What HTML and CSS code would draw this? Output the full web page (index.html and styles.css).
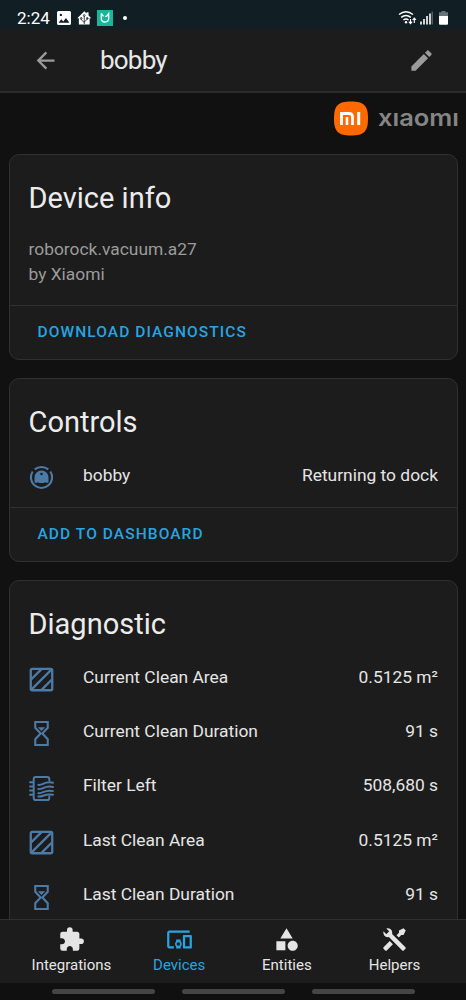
FILE: index.html
```html
<!DOCTYPE html>
<html lang="en">
<head>
<meta charset="utf-8">
<title>bobby</title>
<link rel="stylesheet" href="styles.css">
</head>
<body>
<svg class="defs" aria-hidden="true">
  <symbol id="area" viewBox="0 0 24 24"><g fill="none" stroke="currentColor" stroke-width="2.200"><rect x="1.700" y="1.700" width="20.600" height="20.600" rx="1.500"/><path d="M2 12L12 2M2.500 21.500L21.500 2.500M12 22L22 12"/></g></symbol>
  <symbol id="sand" viewBox="0 0 24 24"><path fill="none" stroke="currentColor" stroke-width="2" d="M6 1H18V6.500L12.800 12L18 17.500V23H6V17.500L11.200 12L6 6.500Z"/><path fill="currentColor" d="M8.500 6H15.500L12 9.500Z"/></symbol>
  <symbol id="filter" viewBox="0 0 24 24"><g fill="none" stroke="currentColor" stroke-width="1.900" stroke-linecap="round"><path d="M19.500 4V3Q19.500 1 17.500 1H6.500Q4.500 1 4.500 3V21Q4.500 23 6.500 23H17.500Q19.500 23 19.500 21V20M1 6H4M1 10H4M1 14H4M1 18H4M9 8.500C13 9.500 15 4.500 23 6.500M9 12.500C13 13.500 15 8.500 23 10.500M9 16.500C13 17.500 15 12.500 23 14.500M9 19.700C13 20.500 15 16.500 23 18"/></g></symbol>
</svg>

<div class="status">
  <span class="clock">2:24</span>
  <svg class="s-img" viewBox="3 3 18 18"><path d="M8.500,13.500L11,16.500L14.500,12L19,18H5M21,19V5C21,3.890 20.100,3 19,3H5A2,2 0 0,0 3,5V19A2,2 0 0,0 5,21H19A2,2 0 0,0 21,19Z" fill="#fff"/><circle cx="8" cy="8" r="1.500" fill="#111e23"/></svg>
  <svg class="s-home" viewBox="0 0 14 14"><path d="M7 .3L9.300 2.500V1.300H11.300V4.500L14 7.200H12.400V13.500H1.600V7.200H0Z" fill="#fff"/><g fill="none" stroke="#111e23" stroke-width=".8"><path d="M7 13V5M7 11.500L3.800 8.500V7.500M7 11L10.200 8V7"/><circle cx="7" cy="4.500" r=".9"/><circle cx="4" cy="7.400" r=".9"/><circle cx="10" cy="7.400" r=".9"/></g></svg>
  <svg class="s-mi" viewBox="0 0 16 16"><rect width="16" height="16" fill="#16b79b"/><path d="M4.300 3.500V8.200C4.300 10.700 5.700 12 8 12S11.700 10.700 11.700 8.200V3.500L9.500 6.300H8.200" fill="none" stroke="#fff" stroke-width="1.300"/><path d="M4.300 3.500L6.500 6.300" stroke="#fff" stroke-width="1.300"/></svg>
  <i class="dot"></i>
  <svg class="s-right" viewBox="0 0 52 16"><g fill="none" stroke="#fff" stroke-width="1.500"><path d="M1 4.500Q8 -1 15 4.500M3.200 7.300Q8 3.500 12.800 7.300M5.400 10Q8 8 10.500 10"/></g><circle cx="8" cy="12.300" r="1.200" fill="#fff"/><path d="M12.500 9V13M10.800 11.700L12.500 13.600L14.200 11.700M16.300 13V8.500M14.600 10L16.300 8L18 10" stroke="#fff" stroke-width="1.100" fill="none"/><path d="M23 14.500V11.500M26 14.500V9M29 14.500V6" stroke="#fff" stroke-width="1.600"/><path d="M32 14.500V3.500" stroke="#fff" stroke-width="1.600"/><path d="M34.200 14.500V1.500" stroke="#647076" stroke-width="1.200"/><path d="M43.500 1H47.500V2.300H50V7H41V2.300H43.500Z" fill="#69747a"/><path d="M41 6H50V13.500Q50 14.700 49 14.700H42Q41 14.700 41 13.500Z" fill="#fff"/></svg>
</div>

<header class="header">
  <svg class="icon back" viewBox="0 0 24 24"><path d="M20,11V13H8L13.500,18.500L12.080,19.920L4.160,12L12.080,4.080L13.500,5.500L8,11H20Z"/></svg>
  <h1>bobby</h1>
  <svg class="icon edit" viewBox="0 0 24 24"><path d="M20.710,7.040C21.100,6.650 21.100,6 20.710,5.630L18.370,3.290C18,2.900 17.350,2.900 16.960,3.290L15.120,5.120L18.870,8.870M3,17.250V21H6.750L17.810,9.930L14.060,6.180L3,17.250Z"/></svg>
</header>

<main class="content">
  <div class="brand">
    <svg class="mark" viewBox="0 0 34 34"><path d="M17 0C30 0 34 4 34 17S30 34 17 34S0 30 0 17S4 0 17 0Z" fill="#ff6900"/><path d="M7.500 23.500V12H15Q18.500 12 18.500 15.500V23.500" fill="none" stroke="#fff" stroke-width="2.800"/><path d="M11.700 15.500H14.300V23.500H11.700ZM23.200 10.600H26.200V23.500H23.200Z" fill="#fff"/></svg>
    <svg class="wordmark" viewBox="0 0 82 20" role="img" aria-label="xiaomi"><text transform="translate(0 16.500) scale(1 1.200)" textLength="81" lengthAdjust="spacingAndGlyphs">xıaomı</text></svg>
  </div>

  <section class="card">
    <h2>Device info</h2>
    <p class="model">roborock.vacuum.a27<br>by Xiaomi</p>
    <div class="action">DOWNLOAD DIAGNOSTICS</div>
  </section>

  <section class="card controls">
    <h2>Controls</h2>
    <div class="row"><svg viewBox="0 0 24 24"><g fill="none" stroke="currentColor" stroke-width="2"><path d="M3.500 6.200A10.200 10.200 0 1 0 20.500 6.200M5.500 4.200A10.200 10.200 0 0 1 18.500 4.200"/></g><path d="M5.300 16.500V12A6.700 6.700 0 0 1 18.700 12V16.500L17 17.300L15.500 16.500L14 17.300H10L8.500 16.500L7 17.300Z" fill="currentColor"/><circle cx="12" cy="8.700" r="1.200" fill="#1c1c1c"/></svg><span>bobby</span><b>Returning to dock</b></div>
    <div class="action">ADD TO DASHBOARD</div>
  </section>

  <section class="card last">
    <h2>Diagnostic</h2>
    <div class="row"><svg><use href="#area"/></svg><span>Current Clean Area</span><b>0.5125 m²</b></div>
    <div class="row"><svg><use href="#sand"/></svg><span>Current Clean Duration</span><b>91 s</b></div>
    <div class="row"><svg><use href="#filter"/></svg><span>Filter Left</span><b>508,680 s</b></div>
    <div class="row"><svg><use href="#area"/></svg><span>Last Clean Area</span><b>0.5125 m²</b></div>
    <div class="row"><svg><use href="#sand"/></svg><span>Last Clean Duration</span><b>91 s</b></div>
  </section>
</main>

<nav class="tabs">
  <div class="tab"><svg viewBox="0 0 24 24"><path d="M20.500,11H19V7C19,5.890 18.100,5 17,5H13V3.500A2.500,2.500 0 0,0 10.500,1A2.500,2.500 0 0,0 8,3.500V5H4A2,2 0 0,0 2,7V10.800H3.500C5,10.800 6.200,12 6.200,13.500C6.200,15 5,16.200 3.500,16.200H2V20A2,2 0 0,0 4,22H7.800V20.500C7.800,19 9,17.800 10.500,17.800C12,17.800 13.200,19 13.200,20.500V22H17A2,2 0 0,0 19,20V16H20.500A2.500,2.500 0 0,0 23,13.500A2.500,2.500 0 0,0 20.500,11Z"/></svg><span>Integrations</span></div>
  <div class="tab active"><svg viewBox="0 0 24 24"><path d="M3 6H21V4H3C1.900 4 1 4.900 1 6V18C1 19.100 1.900 20 3 20H7V18H3V6M13 12H9V13.780C8.390 14.330 8 15.110 8 16C8 16.890 8.390 17.670 9 18.220V20H13V18.220C13.610 17.670 14 16.880 14 16S13.610 14.330 13 13.780V12M11 17.500C10.170 17.500 9.500 16.830 9.500 16S10.170 14.500 11 14.500 12.500 15.170 12.500 16 11.830 17.500 11 17.500M22 8H16C15.500 8 15 8.500 15 9V19C15 19.500 15.500 20 16 20H22C22.500 20 23 19.500 23 19V9C23 8.500 22.500 8 22 8M21 18H17V10H21V18Z"/></svg><span>Devices</span></div>
  <div class="tab"><svg viewBox="0 0 24 24"><path d="M11,13.500V21.500H3V13.500H11M12,2L17.500,11H6.500L12,2M17.500,13C20,13 22,15 22,17.500C22,20 20,22 17.500,22C15,22 13,20 13,17.500C13,15 15,13 17.500,13Z"/></svg><span>Entities</span></div>
  <div class="tab"><svg viewBox="0 0 24 24"><path d="M21.710 20.290L20.290 21.710A1 1 0 0 1 18.880 21.710L7 9.850A3.810 3.810 0 0 1 6 10A4 4 0 0 1 2.220 4.700L4.760 7.240L5.290 6.710L6.710 5.290L7.240 4.760L4.700 2.220A4 4 0 0 1 10 6A3.810 3.810 0 0 1 9.850 7L21.710 18.880A1 1 0 0 1 21.710 20.290M2.290 18.880A1 1 0 0 0 2.290 20.290L3.710 21.710A1 1 0 0 0 5.120 21.710L10.590 16.250L7.760 13.420M20 2L16 4V6L13.830 8.170L15.830 10.170L18 8H20L22 4Z"/></svg><span>Helpers</span></div>
</nav>
<div class="sysnav"><i></i><i></i><i></i></div>
</body>
</html>
```
FILE: styles.css
```css
* { box-sizing: border-box; }
body {
  margin: 0;
  width: 466px;
  height: 1000px;
  overflow: hidden;
  display: flex;
  flex-direction: column;
  background: #111;
  color: #e5e5e5;
  font-family: Roboto, sans-serif;
}
svg { display: block; flex: none; }
.defs { position: absolute; width: 0; height: 0; }

.status {
  flex: none;
  height: 29px;
  display: flex;
  align-items: center;
  padding: 6px 16px 0 17px;
  background: #111e23;
}
.clock { width: 33px; margin-right: 7px; font-size: 17px; line-height: 20px; color: #fff; white-space: nowrap; }
.s-img { width: 14px; height: 14px; margin-right: 6px; }
.s-home { width: 14.500px; height: 14px; margin-right: 5px; }
.s-mi { width: 16px; height: 16px; margin-right: 10px; }
.dot { width: 4px; height: 4px; border-radius: 50%; background: #fff; }
.s-right { width: 52px; height: 16px; margin-left: auto; }

.header {
  flex: none;
  height: 64px;
  display: flex;
  align-items: center;
  padding: 0 31px 0 32px;
  background: #1c1c1c;
  border-bottom: 2px solid #2b2b2b;
}
.icon { width: 27px; height: 27px; fill: #9b9b9b; }
.header h1 { flex: 1; margin: 0 0 0 41px; font-size: 26px; font-weight: 400; line-height: 32px; letter-spacing: -.8px; color: #e8e8e8; }

.content {
  flex: 1;
  min-height: 0;
  overflow: hidden;
  display: flex;
  flex-direction: column;
  padding: 8px 8px 0 9px;
}
.brand { flex: none; height: 53px; display: flex; justify-content: flex-end; gap: 10px; }
.brand .mark { width: 34px; height: 35px; }
.wordmark { width: 82px; height: 20px; margin: 8px -2px 0 0; overflow: visible; }
.wordmark text { font: 600 20px Inter, sans-serif; fill: #858585; }

.card {
  flex: none;
  margin-bottom: 18px;
  background: #1c1c1c;
  border: 1px solid #303030;
  border-radius: 10px;
}
.card h2 { margin: 0; padding: 25px 18.500px 14px; font-size: 29px; font-weight: 400; line-height: 36px; color: #ececec; }
.model { margin: 0; padding: 7px 18.500px 18px; font-size: 17.400px; line-height: 25px; color: #9b9b9b; }
.action {
  height: 54px;
  padding-left: 27.500px;
  border-top: 1px solid #303030;
  font-size: 15.500px;
  font-weight: 500;
  line-height: 53px;
  letter-spacing: 1.080px;
  color: #27a5e3;
}
.row { height: 54.400px; display: flex; padding: 0 19px; font-size: 17.400px; line-height: 24px; }
.controls .row { height: 53px; }
.row svg { width: 25px; height: 25px; margin: 11px 29px 0 0; color: #4d7ba8; }
.row span, .row b { margin-top: 8.500px; font-weight: 400; white-space: nowrap; }
.row b { margin-left: auto; }
.last { padding-bottom: 20px; }

.tabs {
  flex: none;
  height: 64px;
  display: grid;
  grid-template-columns: repeat(4, 107.700px);
  justify-content: center;
  background: #1c1c1c;
  border-top: 1px solid #303030;
}
.tab { display: flex; flex-direction: column; align-items: center; padding-top: 6px; font-size: 15px; line-height: 20px; }
.tab svg { width: 27px; height: 27px; fill: currentColor; }
.tab span { margin-top: 2px; }
.active { color: #27a5e3; }

.sysnav { flex: none; height: 17px; display: flex; justify-content: center; gap: 27px; padding-top: 6px; background: #101010; }
.sysnav i { width: 103px; height: 5px; border-radius: 3px; background: #454545; }
```
